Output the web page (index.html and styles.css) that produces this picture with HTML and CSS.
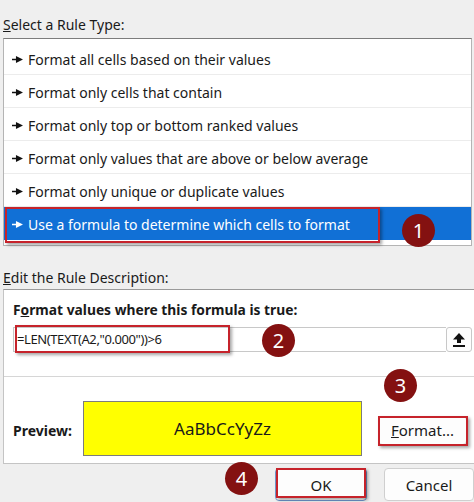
FILE: index.html
```html
<!DOCTYPE html>
<html lang="en">
<head>
    <meta charset="UTF-8">
    <title>New Formatting Rule</title>
    <link rel="stylesheet" href="styles.css">
</head>
<body>
    <div class="dialog">

        <!-- Rule type list -->
        <div class="label label-top"><u>S</u>elect a Rule Type:</div>
        <ul class="rule-list">
            <li>Format all cells based on their values</li>
            <li>Format only cells that contain</li>
            <li>Format only top or bottom ranked values</li>
            <li>Format only values that are above or below average</li>
            <li>Format only unique or duplicate values</li>
            <li class="selected">
                Use a formula to determine which cells to format
                <span class="mark mark-1"></span>
            </li>
        </ul>

        <!-- Rule description -->
        <div class="label label-edit"><u>E</u>dit the Rule Description:</div>
        <div class="panel">
            <div class="panel-top">
                <div class="panel-title">F<u>o</u>rmat values where this formula is true:</div>
                <div class="formula">
                    <div class="formula-input">
                        =LEN(TEXT(A2,"0.000"))&gt;6
                        <span class="mark mark-2"></span>
                    </div>
                    <button class="collapse-btn">
                        <svg width="14" height="16" viewBox="0 0 14 16">
                            <path d="M7 1 L13 7.5 L9 7.5 L9 11 L5 11 L5 7.5 L1 7.5 Z" fill="#111"/>
                            <rect x="1" y="13" width="12" height="2" fill="#111"/>
                        </svg>
                    </button>
                </div>
            </div>
            <div class="panel-preview">
                <span class="preview-label">Preview:</span>
                <div class="preview-box">AaBbCcYyZz</div>
                <button class="btn format-btn"><u>F</u>ormat...<span class="mark mark-3"></span></button>
            </div>
        </div>

        <!-- Dialog buttons -->
        <div class="footer">
            <button class="btn ok-btn">OK<span class="mark mark-4"></span></button>
            <button class="btn cancel-btn">Cancel</button>
        </div>

        <!-- Step numbers -->
        <span class="step step-1">1</span>
        <span class="step step-2">2</span>
        <span class="step step-3">3</span>
        <span class="step step-4">4</span>
    </div>
</body>
</html>
```

FILE: styles.css
```css
body {
    margin: 0;
    background: #efefef;
    font-family: "Noto Sans", "Open Sans", sans-serif;
    font-size: 14px;
    color: #1a1a1a;
    overflow: hidden;
}

.dialog {
    position: relative;
    width: 474px;
    height: 502px;
}

.label {
    display: flex;
    align-items: flex-end;
    padding-left: 3px;
    line-height: 20px;
}

.label-top {
    height: 38px;
    padding-bottom: 3px;
    box-sizing: border-box;
}

.label-edit {
    height: 43px;
    padding-bottom: 1px;
    box-sizing: border-box;
}

/* Rule list box */
.rule-list {
    list-style: none;
    margin: 0 2px 0 3px;
    padding: 3px 0 5px;
    background: #fff;
    border: 1px solid #b4b4b4;
    border-top-color: #7c7c7c;
}

.rule-list li {
    position: relative;
    height: 33px;
    line-height: 35px;
    box-sizing: border-box;
    padding-left: 24px;
    border-bottom: 1px solid #ececec;
}

.rule-list li::before {
    content: "";
    position: absolute;
    left: 8px;
    top: 14px;
    width: 11px;
    height: 7px;
    background: #111;
    clip-path: polygon(0 40%, 36% 40%, 36% 0, 100% 50%, 36% 100%, 36% 60%, 0 60%);
}

.rule-list li.selected {
    background: #1170d6;
    color: #fff;
    border-bottom: none;
}

.rule-list li.selected::before {
    background: #fff;
}

/* Description panel */
.panel {
    margin-left: 3px;
    background: #fff;
    border: 1px solid #c4c4c4;
    border-top-color: #9a9a9a;
    border-right: none;
}

.panel-top {
    padding: 10px 2px 24px 9px;
    border-bottom: 1px solid #d6d6d6;
}

.panel-title {
    font-weight: bold;
    font-size: 13.8px;
    line-height: 20px;
}

.formula {
    display: flex;
    margin-top: 7px;
    height: 25px;
}

.formula-input {
    position: relative;
    flex: 1;
    border: 1px solid #c8c8c8;
    border-right: none;
    line-height: 23px;
    padding-left: 3px;
    font-size: 13px;
    letter-spacing: -0.4px;
}

.collapse-btn {
    width: 26px;
    height: 25px;
    padding: 0;
    border: 1px solid #c8c8c8;
    border-radius: 3px;
    background: #fdfdfd;
    display: flex;
    align-items: center;
    justify-content: center;
}

.panel-preview {
    display: flex;
    align-items: center;
    height: 86px;
    padding: 24px 0 7px 9px;
    box-sizing: border-box;
}

.preview-label {
    width: 70px;
    font-weight: bold;
    margin-top: 3px;
}

.preview-box {
    width: 279px;
    height: 55px;
    box-sizing: border-box;
    background: #ffff00;
    border: 1px solid #7c7c7c;
    display: flex;
    align-items: center;
    justify-content: center;
    font-size: 17px;
}

.btn {
    position: relative;
    font-family: inherit;
    font-size: 15px;
    color: #1a1a1a;
    background: #fdfdfd;
    border: 1px solid #cfcfcf;
    border-radius: 4px;
    padding: 0;
}

.format-btn {
    width: 89px;
    height: 29px;
    margin-left: 16px;
    margin-top: 3px;
}

/* Footer buttons */
.footer {
    display: flex;
    justify-content: flex-end;
    gap: 17px;
    padding-top: 4px;
}

.ok-btn {
    width: 92px;
    height: 33px;
    border-color: #6f98cf;
}

.cancel-btn {
    width: 90px;
    height: 33px;
}

/* Red highlight boxes */
.mark {
    position: absolute;
    border: 2px solid #c6232b;
    box-shadow: 2px 2px 3px rgba(0, 0, 0, 0.35);
    pointer-events: none;
}

.mark-1 {
    left: 1px;
    top: 0;
    width: 371px;
    height: 32px;
}

.mark-2 {
    left: 1px;
    top: -3px;
    width: 211px;
    height: 24px;
}

.mark-3 {
    left: -1px;
    top: -1px;
    width: 86px;
    height: 26px;
}

.mark-4 {
    left: 0;
    top: -1px;
    width: 86px;
    height: 26px;
}

/* Numbered step circles */
.step {
    position: absolute;
    width: 33px;
    height: 33px;
    border-radius: 50%;
    background: #841111;
    color: #fff;
    font-size: 20px;
    line-height: 33px;
    text-align: center;
}

.step-1 { left: 402px; top: 214px; }
.step-2 { left: 262px; top: 324px; }
.step-3 { left: 384px; top: 369px; }
.step-4 { left: 225px; top: 462px; }
```
